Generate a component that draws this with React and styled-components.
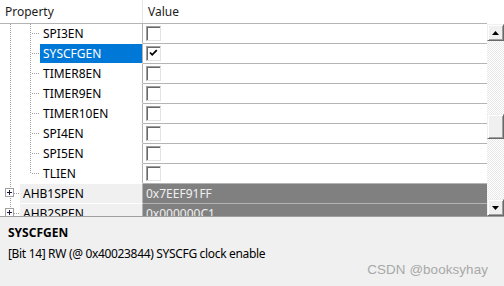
import React from "react";
import styled, { createGlobalStyle, css } from "styled-components";

const Global = createGlobalStyle`
  html, body { margin: 0; padding: 0; background: #ffffff; }
  body { width: 504px; height: 286px; overflow: hidden; font-family: "Noto Sans", "Open Sans", sans-serif; font-size: 12px; color: #000; }
`;

const Window = styled.div`
  position: relative;
  width: 504px;
  height: 286px;
  display: flex;
  flex-direction: column;
  overflow: hidden;
`;

const ListArea = styled.div`
  display: flex;
  height: 216px;
  overflow: hidden;
  background: #ffffff;
`;

const Grid = styled.div`
  width: 487px;
  display: flex;
  flex-direction: column;
`;

const HeaderRow = styled.div`
  display: flex;
  height: 23px;
  border-bottom: 1px solid #b4b4b4;
  flex: none;
`;

const HeaderCell = styled.div`
  display: flex;
  align-items: center;
  box-sizing: border-box;
  padding-left: ${(p) => p.$pad}px;
  ${(p) => p.$w ? css`width: ${p.$w}px; border-right: 1px solid #e5e5e5;` : css`flex: 1;`}
  color: #1b1b1b;
`;

const Row = styled.div`
  display: flex;
  height: 20px;
  flex: none;
`;

const PropCell = styled.div`
  width: 142px;
  display: flex;
  height: 19px;
  border-bottom: 1px solid #ffffff;
  border-right: 1px solid #b4b4b4;
  flex: none;
`;

const ValueCell = styled.div`
  flex: 1;
  display: flex;
  align-items: center;
  height: 19px;
  padding-left: 3px;
  border-bottom: 1px solid #b4b4b4;
  background: ${(p) => (p.$dark ? "#808080" : "#ffffff")};
  color: #f0f0f0;
`;

const Guide = styled.div`
  position: relative;
  width: 20px;
  height: 20px;
  flex: none;
  &::before {
    content: "";
    position: absolute;
    left: 10px;
    top: 0;
    width: 1px;
    height: ${(p) => (p.$kind === "corner" ? "10px" : "20px")};
    background: repeating-linear-gradient(to bottom, #a0a0a0 0 1px, transparent 1px 2px);
  }
  ${(p) =>
    (p.$kind === "tee" || p.$kind === "corner") &&
    css`
      &::after {
        content: "";
        position: absolute;
        left: 11px;
        top: 9px;
        width: 9px;
        height: 1px;
        background: repeating-linear-gradient(to right, transparent 0 1px, #a0a0a0 1px 2px);
      }
    `}
  ${(p) =>
    p.$kind === "plus" &&
    css`
      &::after {
        content: "";
        position: absolute;
        left: 14px;
        top: 9px;
        width: 6px;
        height: 1px;
        background: repeating-linear-gradient(to right, #a0a0a0 0 1px, transparent 1px 2px);
      }
    `}
`;

const PlusBox = styled.span`
  position: absolute;
  left: 5px;
  top: 4px;
  width: 9px;
  height: 9px;
  box-sizing: border-box;
  border: 1px solid #a0a0a0;
  background: #ffffff;
  z-index: 1;
  &::before {
    content: "";
    position: absolute;
    left: 1px;
    top: 3px;
    width: 5px;
    height: 1px;
    background: #1a1a40;
  }
  &::after {
    content: "";
    position: absolute;
    left: 3px;
    top: 1px;
    width: 1px;
    height: 5px;
    background: #1a1a40;
  }
`;

const Label = styled.div`
  flex: 1;
  display: flex;
  align-items: center;
  height: 19px;
  padding-left: 3px;
  white-space: nowrap;
  color: ${(p) => (p.$selected ? "#ffffff" : "#000000")};
  background: ${(p) => (p.$selected ? "#0078d7" : p.$parent ? "#f0f0f0" : "transparent")};
`;

const Check = styled.span`
  width: 15px;
  height: 15px;
  box-sizing: border-box;
  border: 1px solid;
  border-color: #a0a0a0 #e3e3e3 #e3e3e3 #a0a0a0;
  box-shadow: inset 1px 1px 0 #696969;
  background: #ffffff;
  display: flex;
  align-items: center;
  justify-content: center;
  margin-top: -1px;
`;

const ScrollCol = styled.div`
  width: 17px;
  display: flex;
  flex-direction: column;
`;

const ScrollSpacer = styled.div`
  height: 24px;
  flex: none;
`;

const ScrollBar = styled.div`
  flex: 1;
  display: flex;
  flex-direction: column;
  background: repeating-conic-gradient(#e8e8e8 0 25%, #ffffff 0 50%) 0 0 / 2px 2px;
`;

const BtnBox = styled.div`
  width: 17px;
  height: ${(p) => p.$h}px;
  margin-top: ${(p) => p.$mt || 0}px;
  box-sizing: border-box;
  flex: none;
  background: #f0f0f0;
  border-right: 1px solid #696969;
  border-bottom: 1px solid #696969;
  border-top: 1px solid #f0f0f0;
  border-left: 1px solid #f0f0f0;
  box-shadow: inset 1px 1px 0 #ffffff, inset -1px -1px 0 #a0a0a0;
  display: flex;
  align-items: center;
  justify-content: center;
`;

const Track = styled.div`
  flex: 1;
`;

const Panel = styled.div`
  flex: 1;
  background: #f0f0f0;
  border-top: 1px solid #a0a0a0;
  padding: 8px 8px 0 8px;
  display: flex;
  flex-direction: column;
  gap: 5px;
`;

const PanelTitle = styled.div`
  font-weight: 700;
  line-height: 16px;
  color: #000;
`;

const PanelText = styled.div`
  line-height: 16px;
  color: #000;
  letter-spacing: -0.33px;
`;

const Watermark = styled.div`
  position: absolute;
  right: 16px;
  bottom: 9px;
  font-family: "Liberation Sans", Arial, sans-serif;
  font-size: 13.4px;
  color: #a8a8a8;
  letter-spacing: 0.1px;
`;

const CheckMark = () => (
  <svg width="9" height="8" viewBox="0 0 9 8">
    <path d="M1 3.5 L3.2 5.8 L7.8 1.2" fill="none" stroke="#000" strokeWidth="1.8" />
  </svg>
);

const Arrow = ({ down }) => (
  <svg width="7" height="4" viewBox="0 0 7 4">
    <path d={down ? "M0 0 H7 L3.5 4 Z" : "M0 4 H7 L3.5 0 Z"} fill="#000" />
  </svg>
);

const children = [
  { name: "SPI3EN" },
  { name: "SYSCFGEN", checked: true, selected: true },
  { name: "TIMER8EN" },
  { name: "TIMER9EN" },
  { name: "TIMER10EN" },
  { name: "SPI4EN" },
  { name: "SPI5EN" },
  { name: "TLIEN", last: true },
];

const parents = [
  { name: "AHB1SPEN", value: "0x7EEF91FF" },
  { name: "AHB2SPEN", value: "0x000000C1" },
];

export default function App() {
  return (
    <>
      <Global />
      <Window>
        <ListArea>
          <Grid>
            <HeaderRow>
              <HeaderCell $w={143} $pad={5}>Property</HeaderCell>
              <HeaderCell $pad={5}>Value</HeaderCell>
            </HeaderRow>
            {children.map((c) => (
              <Row key={c.name}>
                <PropCell>
                  <Guide $kind="line" />
                  <Guide $kind={c.last ? "corner" : "tee"} />
                  <Label $selected={c.selected}>{c.name}</Label>
                </PropCell>
                <ValueCell>
                  <Check>{c.checked && <CheckMark />}</Check>
                </ValueCell>
              </Row>
            ))}
            {parents.map((p) => (
              <Row key={p.name}>
                <PropCell>
                  <Guide $kind="plus">
                    <PlusBox />
                  </Guide>
                  <Label $parent>{p.name}</Label>
                </PropCell>
                <ValueCell $dark>{p.value}</ValueCell>
              </Row>
            ))}
          </Grid>
          <ScrollCol>
            <ScrollSpacer />
            <ScrollBar>
              <BtnBox $h={17}>
                <Arrow />
              </BtnBox>
              <Track>
                <BtnBox $h={25} $mt={73} />
              </Track>
              <BtnBox $h={17}>
                <Arrow down />
              </BtnBox>
            </ScrollBar>
          </ScrollCol>
        </ListArea>
        <Panel>
          <PanelTitle>SYSCFGEN</PanelTitle>
          <PanelText>[Bit 14] RW (@ 0x40023844) SYSCFG clock enable</PanelText>
        </Panel>
        <Watermark>CSDN @booksyhay</Watermark>
      </Window>
    </>
  );
}
